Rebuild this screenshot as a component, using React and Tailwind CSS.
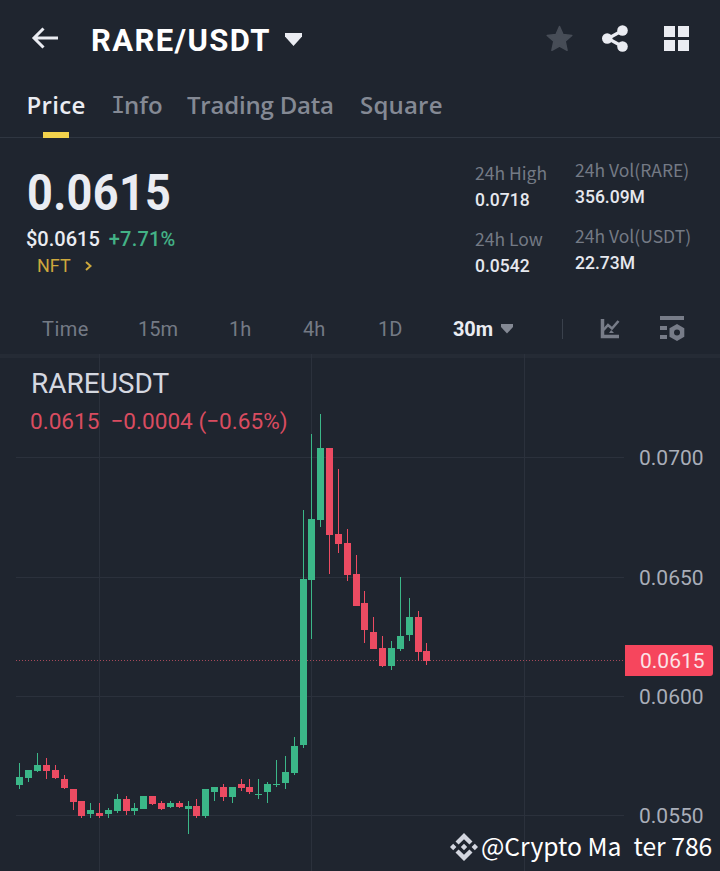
import React from "react";

// [center x, body top, body bottom, wick top, wick bottom, rising]
const candles = [
  [19.5, 777, 785, 763, 789, 1], [28.5, 770, 778, 770, 782, 1], [37.5, 765, 771, 753, 772, 1],
  [46.5, 765, 771, 758, 779, 0], [55.5, 770, 778, 765, 779, 0], [64.5, 779, 788, 775, 789, 0],
  [73.5, 789, 802, 789, 810, 0], [81.5, 801, 816, 801, 818, 0], [90.5, 810, 814, 803, 818, 1],
  [99.5, 813, 816, 803, 818, 0], [108.5, 810, 814, 808, 818, 1], [117.5, 799, 811, 794, 813, 1],
  [126.5, 799, 811, 796, 815, 0], [134.5, 808, 811, 803, 815, 1], [143.5, 796, 809, 796, 809, 1],
  [152.5, 796, 804, 796, 805, 0], [161.5, 803, 809, 801, 810, 0], [170.5, 803, 807, 801, 808, 1],
  [179.5, 803, 807, 801, 808, 0], [188.5, 806, 809, 801, 834, 1], [196.5, 806, 816, 799, 818, 0],
  [205.5, 789, 816, 789, 818, 1], [214.5, 787, 792, 787, 801, 1], [223.5, 787, 797, 784, 801, 0],
  [232.5, 787, 797, 787, 803, 1], [241.5, 784, 788, 779, 791, 0], [249.5, 787, 792, 779, 794, 0],
  [258.5, 794, 795, 779, 799, 1], [267.5, 784, 792, 782, 803, 1], [276.5, 784, 785, 760, 787, 1],
  [285.5, 772, 783, 756, 789, 1], [294.5, 746, 773, 737, 775, 1], [303.5, 579, 745, 510, 748, 1],
  [311.5, 519, 580, 434, 639, 1], [320.5, 448, 520, 414, 527, 1], [329.5, 448, 535, 448, 574, 0],
  [338.5, 534, 544, 469, 553, 0], [347.5, 543, 575, 529, 581, 0], [356.5, 574, 606, 555, 606, 0],
  [364.5, 603, 630, 591, 643, 0], [373.5, 632, 649, 617, 649, 0], [382.5, 648, 666, 636, 667, 0],
  [391.5, 648, 666, 641, 670, 1], [400.5, 636, 649, 577, 651, 1], [409.5, 617, 635, 598, 641, 1],
  [418.5, 617, 652, 611, 661, 0], [426.5, 651, 661, 643, 665, 0],
];

const prices = [["0.0700", 457], ["0.0650", 577], ["0.0600", 696], ["0.0550", 815]];

function Header() {
  return (
    <header className="flex h-[76px] items-center pl-[31px] pr-[31px]">
      <svg width="28" height="22" viewBox="0 0 28 22" fill="none" stroke="#eaecf2" strokeWidth="3">
        <path d="M27 11H3M12.500 1.500L3 11l9.500 9.500" />
      </svg>
      <h1 className="ml-[32px] mt-[6px] w-[180px] whitespace-nowrap font-['Roboto',sans-serif] text-[31px] font-bold leading-[40px] tracking-[1.400px] text-white">RARE/USDT</h1>
      <svg className="ml-[14px] mt-[2px]" width="17" height="13" viewBox="0 0 17 13">
        <path d="M0 0h17v3.500L8.500 13 0 3.500z" fill="#eaecf2" />
      </svg>
      <div className="ml-auto flex items-center">
        <svg width="27" height="27" viewBox="0 0 27 27">
          <path d="M13.500 1.500l3.500 8 8.800.900-6.600 5.900 1.900 9-7.600-4.300-7.600 4.300 1.900-9L1.200 10.400l8.800-.900z" fill="#474d57" stroke="#474d57" strokeWidth="1.500" strokeLinejoin="round" />
        </svg>
        <svg className="ml-[29px]" width="27" height="27" viewBox="0 0 27 27" fill="#eaecf2">
          <path d="M20.500 5.500L6 13.500l14.500 8" fill="none" stroke="#eaecf2" strokeWidth="3.200" />
          <circle cx="20.500" cy="5.500" r="5.300" />
          <circle cx="5.200" cy="13.500" r="5.200" />
          <circle cx="20.500" cy="21.500" r="5.300" />
        </svg>
        <svg className="ml-[35px]" width="25" height="25" viewBox="0 0 25 25" fill="#eaecf2">
          <path d="M0 0h11v11H0zM14 0h11v11H14zM0 14h11v11H0zM14 14h11v11H14z" />
        </svg>
      </div>
    </header>
  );
}

function Tabs() {
  return (
    <nav className="flex h-[62px] border-b border-[#2f3641] pl-[27px] pt-[13px] font-['Open_Sans',sans-serif] text-[24px] font-semibold leading-[32px] text-[#848994]">
      <div className="mr-[28px] flex w-[58px] flex-col items-center whitespace-nowrap text-[#eaecf2]">
        <span className="tracking-[0.300px]">Price</span>
        <span className="mt-[11px] h-[6px] w-[26px] shrink-0 bg-[#f2d24c]" />
      </div>
      <span className="flex w-[74px] whitespace-nowrap"><span className="-ml-[2px] w-[13px] font-['DejaVu_Sans_Mono',monospace] text-[23.500px] font-normal">I</span>nfo</span>
      <span className="w-[173px] whitespace-nowrap tracking-[-0.200px]">Trading Data</span>
      <span className="whitespace-nowrap tracking-[0.200px]">Square</span>
    </nav>
  );
}

function Stat({ label, value }) {
  return (
    <div className="flex h-[66px] flex-col whitespace-nowrap">
      <span className="-mt-[2px] font-['Noto_Sans_CJK_SC',sans-serif] text-[17.500px] leading-[28px] text-[#747a85]">{label}</span>
      <span className="font-['Roboto',sans-serif] text-[17.500px] font-medium leading-[26px] text-[#e6e8ee]">{value}</span>
    </div>
  );
}

function Summary() {
  return (
    <section className="flex h-[162px] pl-[27px] pt-[22px]">
      <div className="flex w-[448px] flex-col whitespace-nowrap font-['Roboto',sans-serif]">
        <span className="mt-[6px] origin-left scale-x-90 text-[50px] font-bold leading-[54px] tracking-[0.400px] text-[#eaecf2]">0.0615</span>
        <div className="-ml-px mt-[6px] flex gap-[9px] text-[20px] font-medium leading-[26px]">
          <span className="text-[#eaecf2]">$0.0615</span>
          <span className="tracking-[0.200px] text-[#43b286]">+7.71%</span>
        </div>
        <div className="ml-[10px] flex items-center text-[18px] leading-[27px] text-[#cda83d]">
          NFT
          <svg className="ml-[14px]" width="7" height="10" viewBox="0 0 7 10" fill="none" stroke="#cda83d" strokeWidth="2"><path d="M1 1l4.500 4L1 9" /></svg>
        </div>
      </div>
      <div className="w-[100px] pt-[1px]">
        <Stat label="24h High" value="0.0718" />
        <Stat label="24h Low" value="0.0542" />
      </div>
      <div className="-mt-[2px]">
        <Stat label="24h Vol(RARE)" value="356.09M" />
        <Stat label="24h Vol(USDT)" value="22.73M" />
      </div>
    </section>
  );
}

function Intervals() {
  return (
    <div className="flex h-[53px] items-center whitespace-nowrap pl-[42px] pt-[4px] font-['Roboto',sans-serif] text-[20px] text-[#747a85]">
      <span className="w-[96px] pt-px tracking-[0.500px]">Time</span>
      <span className="w-[91px] pt-px">15m</span>
      <span className="w-[74px] pt-px">1h</span>
      <span className="w-[75px] pt-px">4h</span>
      <span className="w-[75px] pt-px">1D</span>
      <span className="w-[48px] pt-px font-bold tracking-[-0.100px] text-[#eaecf2]">30m</span>
      <svg width="12" height="10" viewBox="0 0 12 10"><path d="M0 0h12v3L6 9.500 0 3z" fill="#848994" /></svg>
      <span className="ml-[49px] h-[20px] w-px bg-[#3a414c]" />
      <svg className="ml-[37px]" width="20" height="20" viewBox="0 0 20 20" fill="none" stroke="#777c88" strokeWidth="3">
        <path d="M2.500 0v17.500H19" strokeWidth="3.500" />
        <path d="M3.500 11L8 6l4 3.500 6.500-7.500" strokeWidth="2.600" />
        <path d="M9 14l2.200-3 2.800 3z" fill="#777c88" stroke="none" />
      </svg>
      <svg className="ml-[40px]" width="25" height="26" viewBox="0 0 25 26" fill="#777c88">
        <path d="M0 0h24v4H0zM0 10h7v4H0zM0 19h7v4H0z" />
        <path fillRule="evenodd" d="M17 8l7.300 4.200v8.600L17 25l-7.500-4.200v-8.600zM17 13.500a3 3 0 100 6 3 3 0 000-6z" />
      </svg>
    </div>
  );
}

function Chart() {
  return (
    <section className="relative h-[518px]">
      <svg className="block" width="720" height="518" viewBox="0 353 720 518" shapeRendering="crispEdges">
        <rect x="0" y="354" width="720" height="4" fill="#252b35" />
        {[99, 311, 524].map((x) => <rect key={x} x={x} y="354" width="1" height="517" fill="#2b313c" />)}
        {prices.map(([p, y]) => <rect key={p} x="16" y={y} width="608" height="1" fill="#2b313c" />)}
        <path d="M16 660.500H625" stroke="#a6495a" strokeDasharray="1 2" />
        {candles.map(([x, top, bottom, high, low, up]) => (
          <g key={x} fill={up ? "#3bb788" : "#ec4b62"}>
            <rect x={x - 0.5} y={high} width="1" height={low - high} />
            <rect x={x - 3.5} y={top} width="7" height={bottom - top} />
          </g>
        ))}
        <path d="M625 645h85a3 3 0 013 3v25a3 3 0 01-3 3h-85z" fill="#f6465d" shapeRendering="auto" />
        <g className="font-['Roboto',sans-serif] text-[21px]" fill="#a9aeb9">
          {prices.map(([p, y]) => <text key={p} x="639" y={y + 8}>{p}</text>)}
          <text x="640" y="668" fill="#fbe3e7">0.0615</text>
        </g>
      </svg>
      <div className="absolute left-[31px] top-[15px] whitespace-nowrap font-['Roboto',sans-serif]">
        <div className="text-[28px] leading-[32px] text-[#d5d8e0]">RAREUSDT</div>
        <div className="-ml-px mt-[8px] flex gap-[11px] text-[22.600px] leading-[28px] text-[#d94c60]">
          <span>0.0615</span>
          <span>−0.0004 (−0.65%)</span>
        </div>
      </div>
      <div className="absolute left-[450px] top-[474px] flex items-center whitespace-pre font-['Noto_Sans_CJK_SC',sans-serif] text-[24.700px] leading-[36px] text-white">
        <svg className="mt-[4px]" width="28" height="28" viewBox="0 0 28 28" fill="#d3d6df">
          <path d="M14 0l8.500 8.500-3.100 3.100L14 6.200l-5.400 5.400-3.100-3.100zM14 28l-8.500-8.500 3.100-3.100 5.400 5.400 5.400-5.400 3.100 3.100zM3.200 10.800L6.400 14l-3.200 3.200L0 14zM24.800 10.800L28 14l-3.200 3.200-3.200-3.200zM14 10.800l3.200 3.200-3.200 3.200-3.200-3.200z" />
        </svg>
        <span className="ml-[3px]">@Crypto Ma</span>
        <span className="ml-[12px]">ter 786</span>
      </div>
    </section>
  );
}

export default function App() {
  return (
    <main className="h-[871px] w-[720px] overflow-hidden bg-[#1f252f]">
      <Header />
      <Tabs />
      <Summary />
      <Intervals />
      <Chart />
    </main>
  );
}
